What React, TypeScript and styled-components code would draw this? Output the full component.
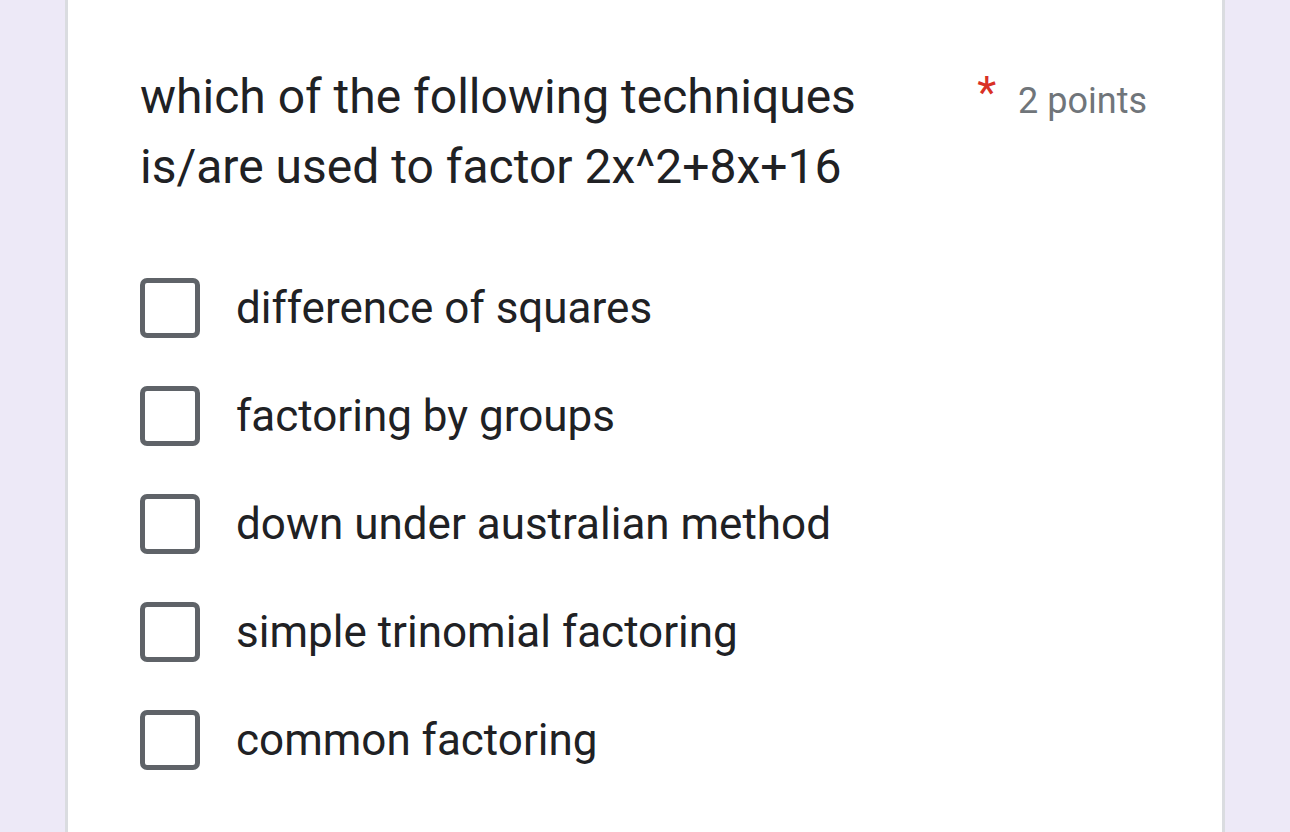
import React from "react";
import styled, { createGlobalStyle } from "styled-components";

const GlobalStyle = createGlobalStyle`
  html, body {
    margin: 0;
    padding: 0;
    background: #ede9f7;
    font-family: Roboto, "Noto Sans", Arial, sans-serif;
    overflow: hidden;
  }
`;

const Page = styled.div`
  width: 1290px;
  height: 832px;
  overflow: hidden;
  display: flex;
  justify-content: center;
  background: #ede9f7;
`;

const Card = styled.div`
  width: 1160px;
  margin-top: -24px;
  height: 900px;
  box-sizing: border-box;
  background: #fff;
  border: 3px solid #dadce0;
  border-radius: 24px;
  padding: 92px 75px 0 72px;
`;

const Header = styled.div`
  display: flex;
  align-items: flex-start;
  justify-content: space-between;
`;

const Title = styled.div`
  width: 800px;
  font-size: 48px;
  line-height: 70px;
  color: #202124;
  margin-top: -9px;
`;

const Points = styled.div`
  display: flex;
  align-items: flex-start;
  gap: 22px;
  color: #70757a;
`;

const Star = styled.span`
  color: #d93025;
  font-size: 44px;
  line-height: 40px;
  margin-top: 2px;
`;

const PointsText = styled.span`
  font-size: 36px;
  line-height: 40px;
  margin-top: 10px;
`;

const Options = styled.div`
  display: flex;
  flex-direction: column;
  gap: 48px;
  margin-top: 76px;
`;

const Option = styled.label`
  display: flex;
  align-items: center;
  gap: 36px;
  height: 60px;
  font-size: 44px;
  color: #202124;
`;

const Box = styled.span`
  width: 60px;
  height: 60px;
  box-sizing: border-box;
  border: 5px solid #5f6368;
  border-radius: 7px;
  flex-shrink: 0;
`;

const options = [
  "difference of squares",
  "factoring by groups",
  "down under australian method",
  "simple trinomial factoring",
  "common factoring",
];

export default function App() {
  return (
    <Page>
      <GlobalStyle />
      <Card>
        <Header>
          <Title>which of the following techniques is/are used to factor 2x^2+8x+16</Title>
          <Points>
            <Star>*</Star>
            <PointsText>2 points</PointsText>
          </Points>
        </Header>
        <Options>
          {options.map((o) => (
            <Option key={o}>
              <Box />
              {o}
            </Option>
          ))}
        </Options>
      </Card>
    </Page>
  );
}
